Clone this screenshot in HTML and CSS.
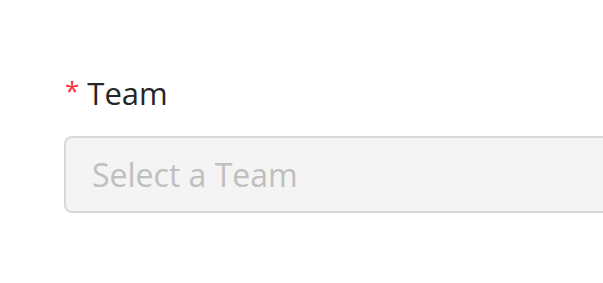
FILE: index.html
```html
<!DOCTYPE html>
<html>
<head>
<meta charset="utf-8">
<link rel="stylesheet" href="styles.css">
</head>
<body>
<div class="form-item">
  <label class="label"><span class="req">*</span>Team</label>
  <div class="select">
    <span class="placeholder">Select a Team</span>
  </div>
</div>
</body>
</html>
```
FILE: styles.css
```css
html, body {
  margin: 0;
  padding: 0;
  background: #fff;
  overflow: hidden;
  width: 603px;
  height: 283px;
}
.form-item {
  padding: 70px 0 0 64px;
  font-family: "Open Sans", "Noto Sans", sans-serif;
  display: flex;
  flex-direction: column;
  gap: 20px;
}
.label {
  font-size: 31px;
  line-height: 46px;
  color: #262626;
  display: flex;
  align-items: center;
}
.req {
  color: #ff2d3a;
  font-size: 26px;
  margin-right: 8px;
  margin-left: 1px;
  position: relative;
  top: -3px;
}
.select {
  height: 77px;
  box-sizing: border-box;
  border: 2px solid #d9d9d9;
  border-right: none;
  border-radius: 8px 0 0 8px;
  background: #f4f4f4;
  display: flex;
  align-items: center;
  padding-left: 26px;
}
.placeholder {
  font-size: 32px;
  color: #bfbfbf;
}
```
